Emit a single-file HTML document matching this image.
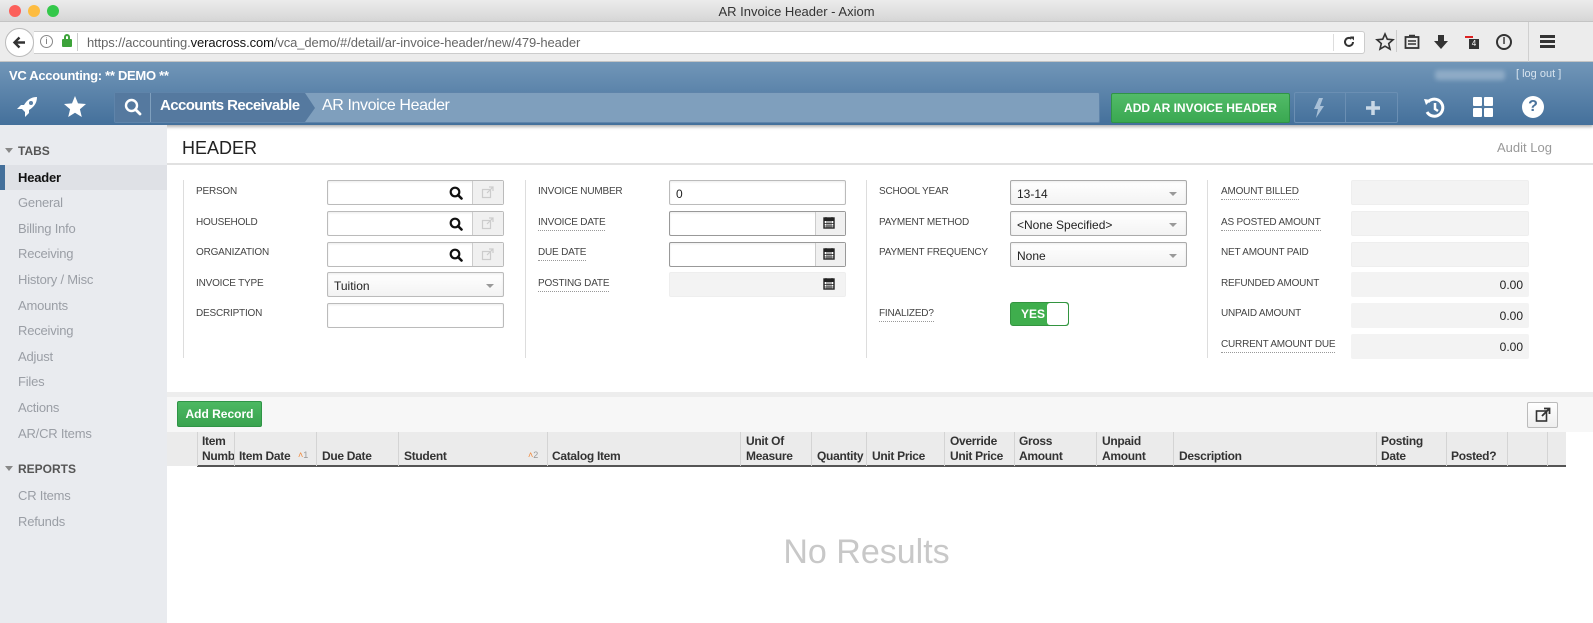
<!DOCTYPE html>
<html><head><meta charset="utf-8"><style>
*{box-sizing:border-box;margin:0;padding:0}
body{width:1593px;height:623px;overflow:hidden;position:relative;font-family:"Liberation Sans",sans-serif;background:#fff}
.a{position:absolute}
.lbl{position:absolute;font-size:10px;color:#444;letter-spacing:-0.2px}
.dot{border-bottom:1px dotted #999;padding-bottom:2px}
.in{position:absolute;height:25px;border:1px solid #bbb;border-radius:2px;background:#fff;font-size:12px;color:#222;padding:6px 6px;box-shadow:inset 0 1px 2px rgba(0,0,0,.08)}
.ro{position:absolute;height:25px;background:#f3f3f3;border:1px solid #eee;border-radius:2px;font-size:12px;color:#222;text-align:right;padding:6px 6px}
.sel:after{content:"";position:absolute;right:9px;top:11px;border:4px solid transparent;border-top:4px solid #999}
.side{position:absolute;left:18px;font-size:13px;color:#9a9ea5;letter-spacing:-0.2px}
.th{position:absolute;top:434px;font-size:12px;font-weight:bold;color:#333;line-height:15px;letter-spacing:-0.3px}
.vl{position:absolute;top:432px;height:34px;width:1px;background:#d4d4d4}
</style></head><body>
<svg width="0" height="0" style="position:absolute"><defs>
<g id="mag"><circle cx="6" cy="6" r="4.3" fill="none" stroke="#111" stroke-width="2.2"/><path d="M9 9l3.5 3.5" stroke="#111" stroke-width="2.6" stroke-linecap="round"/></g>
<g id="cal"><rect x="1" y="2" width="10" height="10" fill="#fff" stroke="#222" stroke-width="1.4"/><rect x="1" y="2" width="10" height="3" fill="#222"/><path d="M3 1v2M9 1v2M4 5v7M6 5v7M8 5v7M1 7.5h10M1 10h10" stroke="#222" stroke-width="0.8"/></g>
<g id="ext"><rect x="1.5" y="3.5" width="8" height="8" fill="none" stroke="#ccc" stroke-width="1.2"/><path d="M6 7l6-6M8 1h4v4" fill="none" stroke="#ccc" stroke-width="1.2"/></g>
</defs></svg>
<!-- title bar -->
<div class="a" style="left:0;top:0;width:1593px;height:22px;background:linear-gradient(#ececec,#d6d6d6);border-bottom:1px solid #c4c4c4"></div>
<div class="a" style="left:9px;top:5px;width:12px;height:12px;border-radius:6px;background:#fc605b"></div>
<div class="a" style="left:28px;top:5px;width:12px;height:12px;border-radius:6px;background:#fdbc40"></div>
<div class="a" style="left:47px;top:5px;width:12px;height:12px;border-radius:6px;background:#34c84a"></div>
<div class="a" style="left:0;top:4px;width:1593px;text-align:center;font-size:13px;color:#333">AR Invoice Header - Axiom</div>
<!-- toolbar -->
<div class="a" style="left:0;top:22px;width:1593px;height:40px;background:#ececec;border-bottom:1px solid #c8c8c8"></div>
<div class="a" style="left:34px;top:31px;width:1331px;height:23px;background:#fff;border:1px solid #ccc;border-left:none;border-radius:0 3px 3px 0"></div>
<div class="a" style="left:5px;top:28px;width:29px;height:29px;border-radius:15px;background:#fff;border:1px solid #bbb"></div>
<svg class="a" style="left:11px;top:34px" width="17" height="17"><path d="M14 8.5H4M8.5 3.5l-5 5 5 5" fill="none" stroke="#333" stroke-width="2.4"/></svg>
<div class="a" style="left:40px;top:35px;width:13px;height:13px;border:1px solid #888;border-radius:7px;font-size:9px;text-align:center;line-height:11px;color:#666">i</div>
<div class="a" style="left:62px;top:39px;width:10px;height:8px;background:#3da33a;border-radius:1px"></div>
<div class="a" style="left:64px;top:34px;width:6px;height:7px;border:2px solid #3da33a;border-bottom:none;border-radius:3px 3px 0 0"></div>
<div class="a" style="left:77px;top:33px;width:1px;height:18px;background:#ccc"></div>
<div class="a" style="left:87px;top:35px;font-size:13px;color:#666;letter-spacing:-0.1px">https://accounting.<span style="color:#111">veracross.com</span>/vca_demo/#/detail/ar-invoice-header/new/479-header</div>
<div class="a" style="left:1333px;top:34px;width:1px;height:17px;background:#ddd"></div>
<svg class="a" style="left:1342px;top:35px" width="14" height="14"><path d="M11 7a4 4 0 1 1-1.5-3.2" fill="none" stroke="#333" stroke-width="2"/><path d="M8 1.5h4v4z" fill="#333"/></svg>
<svg class="a" style="left:1375px;top:32px" width="20" height="20"><path d="M10 2l2.3 5.2 5.7.5-4.3 3.8 1.3 5.6L10 14.2 5 17.1l1.3-5.6L2 7.7l5.7-.5z" fill="none" stroke="#333" stroke-width="1.6"/></svg>
<div class="a" style="left:1396px;top:30px;width:1px;height:22px;background:#ccc"></div>
<svg class="a" style="left:1404px;top:34px" width="16" height="16"><rect x="1.5" y="3" width="13" height="11" fill="none" stroke="#333" stroke-width="1.8"/><path d="M5 1.5h6M4 7h8M4 10h8" stroke="#333" stroke-width="1.6"/></svg>
<svg class="a" style="left:1433px;top:34px" width="16" height="16"><path d="M5 1h6v6h4l-7 8-7-8h4z" fill="#333"/></svg>
<div class="a" style="left:1465px;top:36px;width:8px;height:2px;background:#d22"></div>
<div class="a" style="left:1469px;top:39px;width:10px;height:10px;background:#333;color:#fff;font-size:8px;text-align:center;line-height:10px">4</div>
<div class="a" style="left:1496px;top:34px;width:16px;height:16px;border:2px solid #333;border-radius:8px;font-size:10px;text-align:center;line-height:12px;font-weight:bold;color:#333">I</div>
<div class="a" style="left:1528px;top:22px;width:1px;height:40px;background:#d0d0d0"></div>
<div class="a" style="left:1540px;top:35px;width:15px;height:3px;background:#333;box-shadow:0 5px 0 #333,0 10px 0 #333"></div>
<!-- app header -->
<div class="a" style="left:0;top:62px;width:1593px;height:63px;background:linear-gradient(#7196b8,#44709b);box-shadow:0 2px 3px rgba(0,0,0,.3)"></div>
<div class="a" style="left:9px;top:68px;font-size:13px;color:#fff;font-weight:bold;letter-spacing:-0.3px">VC Accounting: ** DEMO **</div>
<div class="a" style="left:1435px;top:70px;width:70px;height:10px;background:#8eabc6;border-radius:3px;filter:blur(2px)"></div>
<div class="a" style="left:1516px;top:68px;font-size:11px;color:#d7e3ee">[ log out ]</div>
<svg class="a" style="left:16px;top:96px" width="22" height="22"><path d="M21 1c-6 0-10 3-13 8l-3 0-4 4 5 0 3 3 0 5 4-4 0-3c5-3 8-7 8-13z" fill="#fff"/><circle cx="15" cy="7" r="2" fill="#5a80a6"/></svg>
<svg class="a" style="left:63px;top:95px" width="24" height="24"><path d="M12 1l3 7.4 8 .6-6.1 5.2 1.9 7.8L12 17.8 5.2 22l1.9-7.8L1 9l8-.6z" fill="#fff"/></svg>
<div class="a" style="left:114px;top:92px;width:986px;height:31px;background:#7f9fbd;border:1px solid #5f84aa;border-radius:2px"></div>
<div class="a" style="left:115px;top:93px;width:190px;height:29px;background:#55799f"></div>
<div class="a" style="left:305px;top:93px;width:0;height:0;border-top:15px solid transparent;border-bottom:14px solid transparent;border-left:10px solid #55799f"></div>
<div class="a" style="left:150px;top:93px;width:1px;height:29px;background:#7f9fbd"></div>
<svg class="a" style="left:124px;top:98px" width="18" height="18"><circle cx="7.5" cy="7.5" r="5.5" fill="none" stroke="#fff" stroke-width="2.4"/><path d="M11.5 11.5l4.5 4.5" stroke="#fff" stroke-width="2.8" stroke-linecap="round"/></svg>
<div class="a" style="left:160px;top:97px;font-size:15px;color:#fff;font-weight:bold;letter-spacing:-0.6px">Accounts Receivable</div>
<div class="a" style="left:322px;top:97px;font-size:16px;color:#fff;letter-spacing:-0.4px">AR Invoice Header</div>
<div class="a" style="left:1111px;top:93px;width:179px;height:30px;background:linear-gradient(#52bb68,#3aa851);border:1px solid #2f9446;border-radius:2px;color:#fff;font-size:12px;font-weight:bold;text-align:center;line-height:28px">ADD AR INVOICE HEADER</div>
<div class="a" style="left:1294px;top:92px;width:104px;height:31px;border:1px solid #6b8fb3;border-radius:2px"></div>
<div class="a" style="left:1345px;top:92px;width:1px;height:31px;background:#6b8fb3"></div>
<svg class="a" style="left:1313px;top:98px" width="12" height="20"><path d="M6 0L1 11h4l-2 9 8-12H7l3-8z" fill="#a8c0d7"/></svg>
<svg class="a" style="left:1365px;top:100px" width="16" height="16"><path d="M8 1v14M1 8h14" stroke="#c9d8e6" stroke-width="3.5"/></svg>
<svg class="a" style="left:1423px;top:96px" width="24" height="24"><path d="M5 6A8.5 8.5 0 1 1 4 16" fill="none" stroke="#fff" stroke-width="3"/><path d="M1 3l7 1-5 5z" fill="#fff"/><path d="M12 7v6l3 2" fill="none" stroke="#fff" stroke-width="2.5"/></svg>
<div class="a" style="left:1473px;top:97px;width:9px;height:9px;background:#fff;border-radius:1px;box-shadow:11px 0 #fff,0 11px #fff,11px 11px #fff"></div>
<div class="a" style="left:1522px;top:96px;width:22px;height:22px;border-radius:11px;background:#fff;color:#4a739c;font-weight:bold;font-size:16px;text-align:center;line-height:22px">?</div>
<!-- sidebar -->
<div class="a" style="left:0;top:125px;width:167px;height:498px;background:#e9ebef"></div>
<div class="a" style="left:5px;top:148px;border:4px solid transparent;border-top:5px solid #888"></div>
<div class="a" style="left:18px;top:144px;font-size:12px;font-weight:bold;color:#555">TABS</div>
<div class="a" style="left:0;top:165px;width:167px;height:25px;background:#dfe1e6;border-left:5px solid #44709b"></div>
<div class="side" style="top:170px;color:#111;font-weight:bold">Header</div>
<div class="side" style="top:195px">General</div>
<div class="side" style="top:221px">Billing Info</div>
<div class="side" style="top:246px">Receiving</div>
<div class="side" style="top:272px">History / Misc</div>
<div class="side" style="top:298px">Amounts</div>
<div class="side" style="top:323px">Receiving</div>
<div class="side" style="top:349px">Adjust</div>
<div class="side" style="top:374px">Files</div>
<div class="side" style="top:400px">Actions</div>
<div class="side" style="top:426px">AR/CR Items</div>
<div class="a" style="left:5px;top:466px;border:4px solid transparent;border-top:5px solid #888"></div>
<div class="a" style="left:18px;top:462px;font-size:12px;font-weight:bold;color:#555">REPORTS</div>
<div class="side" style="top:488px">CR Items</div>
<div class="side" style="top:514px">Refunds</div>
<!-- content header -->
<div class="a" style="left:182px;top:138px;font-size:18px;color:#222">HEADER</div>
<div class="a" style="left:1497px;top:140px;font-size:13px;color:#999">Audit Log</div>
<div class="a" style="left:167px;top:163px;width:1426px;height:2px;background:#e1e1e1"></div>
<!-- column dividers -->
<div class="a" style="left:183px;top:180px;width:1px;height:178px;background:#ddd"></div>
<div class="a" style="left:525px;top:180px;width:1px;height:178px;background:#ddd"></div>
<div class="a" style="left:866px;top:180px;width:1px;height:178px;background:#ddd"></div>
<div class="a" style="left:1207px;top:180px;width:1px;height:178px;background:#ddd"></div>
<!-- col1 -->
<div class="lbl" style="left:196px;top:186px">PERSON</div>
<div class="lbl" style="left:196px;top:217px">HOUSEHOLD</div>
<div class="lbl" style="left:196px;top:247px">ORGANIZATION</div>
<div class="lbl" style="left:196px;top:278px">INVOICE TYPE</div>
<div class="lbl" style="left:196px;top:308px">DESCRIPTION</div>
<div class="in" style="left:327px;top:180px;width:177px"></div>
<div class="in" style="left:327px;top:211px;width:177px"></div>
<div class="in" style="left:327px;top:242px;width:177px"></div>
<div class="a" style="left:472px;top:181px;width:31px;height:23px;background:#f0f0f0;border-left:1px solid #ccc"></div>
<div class="a" style="left:472px;top:212px;width:31px;height:23px;background:#f0f0f0;border-left:1px solid #ccc"></div>
<div class="a" style="left:472px;top:243px;width:31px;height:23px;background:#f0f0f0;border-left:1px solid #ccc"></div>
<svg class="a" style="left:449px;top:186px" width="14" height="14"><use href="#mag"/></svg>
<svg class="a" style="left:449px;top:217px" width="14" height="14"><use href="#mag"/></svg>
<svg class="a" style="left:449px;top:248px" width="14" height="14"><use href="#mag"/></svg>
<svg class="a" style="left:481px;top:186px" width="14" height="14"><use href="#ext"/></svg>
<svg class="a" style="left:481px;top:217px" width="14" height="14"><use href="#ext"/></svg>
<svg class="a" style="left:481px;top:248px" width="14" height="14"><use href="#ext"/></svg>
<div class="in sel" style="left:327px;top:272px;width:177px;background:linear-gradient(#fff,#f3f3f3)">Tuition</div>
<div class="in" style="left:327px;top:303px;width:177px"></div>
<!-- col2 -->
<div class="lbl" style="left:538px;top:186px">INVOICE NUMBER</div>
<div class="lbl dot" style="left:538px;top:217px">INVOICE DATE</div>
<div class="lbl dot" style="left:538px;top:247px">DUE DATE</div>
<div class="lbl dot" style="left:538px;top:278px">POSTING DATE</div>
<div class="in" style="left:669px;top:180px;width:177px">0</div>
<div class="in" style="left:669px;top:211px;width:177px;border-color:#999"></div>
<div class="in" style="left:669px;top:242px;width:177px;border-color:#999"></div>
<div class="ro" style="left:669px;top:272px;width:177px"></div>
<div class="a" style="left:815px;top:212px;width:30px;height:23px;background:#f0f0f0;border-left:1px solid #ccc"></div>
<div class="a" style="left:815px;top:243px;width:30px;height:23px;background:#f0f0f0;border-left:1px solid #ccc"></div>
<svg class="a" style="left:823px;top:216px" width="13" height="14"><use href="#cal"/></svg>
<svg class="a" style="left:823px;top:247px" width="13" height="14"><use href="#cal"/></svg>
<svg class="a" style="left:823px;top:277px" width="13" height="14"><use href="#cal"/></svg>
<!-- col3 -->
<div class="lbl" style="left:879px;top:186px">SCHOOL YEAR</div>
<div class="lbl" style="left:879px;top:217px">PAYMENT METHOD</div>
<div class="lbl" style="left:879px;top:247px">PAYMENT FREQUENCY</div>
<div class="lbl dot" style="left:879px;top:308px">FINALIZED?</div>
<div class="in sel" style="left:1010px;top:180px;width:177px;border-color:#aaa;background:linear-gradient(#fff,#f3f3f3)">13-14</div>
<div class="in sel" style="left:1010px;top:211px;width:177px;border-color:#aaa;background:linear-gradient(#fff,#f3f3f3)">&lt;None Specified&gt;</div>
<div class="in sel" style="left:1010px;top:242px;width:177px;border-color:#aaa;background:linear-gradient(#fff,#f3f3f3)">None</div>
<div class="a" style="left:1010px;top:302px;width:59px;height:24px;background:#3fae4d;border:1px solid #339440;border-radius:3px;color:#fff;font-size:12px;font-weight:bold;line-height:22px;padding-left:10px">YES</div>
<div class="a" style="left:1047px;top:303px;width:21px;height:22px;background:#fff;border-radius:3px"></div>
<!-- col4 -->
<div class="lbl dot" style="left:1221px;top:186px">AMOUNT BILLED</div>
<div class="lbl dot" style="left:1221px;top:217px">AS POSTED AMOUNT</div>
<div class="lbl" style="left:1221px;top:247px">NET AMOUNT PAID</div>
<div class="lbl" style="left:1221px;top:278px">REFUNDED AMOUNT</div>
<div class="lbl" style="left:1221px;top:308px">UNPAID AMOUNT</div>
<div class="lbl dot" style="left:1221px;top:339px">CURRENT AMOUNT DUE</div>
<div class="ro" style="left:1351px;top:180px;width:178px"></div>
<div class="ro" style="left:1351px;top:211px;width:178px"></div>
<div class="ro" style="left:1351px;top:242px;width:178px"></div>
<div class="ro" style="left:1351px;top:272px;width:178px;border:none">0.00</div>
<div class="ro" style="left:1351px;top:303px;width:178px;border:none">0.00</div>
<div class="ro" style="left:1351px;top:334px;width:178px;border:none">0.00</div>
<!-- grid -->
<div class="a" style="left:167px;top:392px;width:1426px;height:5px;background:#ededed"></div>
<div class="a" style="left:167px;top:397px;width:1426px;height:35px;background:#f7f7f7"></div>
<div class="a" style="left:177px;top:401px;width:85px;height:26px;background:linear-gradient(#4cb862,#39a34f);border:1px solid #2f9446;border-radius:2px;color:#fff;font-size:12px;font-weight:bold;text-align:center;line-height:24px">Add Record</div>
<div class="a" style="left:1527px;top:402px;width:31px;height:26px;background:linear-gradient(#fff,#eee);border:1px solid #bbb;border-radius:2px"></div>
<svg class="a" style="left:1535px;top:407px" width="16" height="16"><rect x="1.5" y="4" width="10" height="10" fill="none" stroke="#333" stroke-width="1.6"/><path d="M7 9l7-7M9 1.5h5.5V7" fill="none" stroke="#333" stroke-width="1.8"/></svg>
<div class="a" style="left:167px;top:432px;width:1399px;height:34px;background:#ebebeb"></div>
<div class="a" style="left:197px;top:465px;width:1369px;height:2px;background:#555"></div>
<div class="a" style="left:1566px;top:432px;width:27px;height:191px;background:#fff"></div>
<div class="vl" style="left:197px"></div><div class="vl" style="left:234px"></div><div class="vl" style="left:316px"></div>
<div class="vl" style="left:398px"></div><div class="vl" style="left:547px"></div><div class="vl" style="left:740px"></div>
<div class="vl" style="left:811px"></div><div class="vl" style="left:866px"></div><div class="vl" style="left:944px"></div>
<div class="vl" style="left:1014px"></div><div class="vl" style="left:1096px"></div><div class="vl" style="left:1173px"></div>
<div class="vl" style="left:1376px"></div><div class="vl" style="left:1446px"></div><div class="vl" style="left:1507px"></div><div class="vl" style="left:1547px"></div>
<div class="th" style="left:202px;width:32px;overflow:hidden;white-space:nowrap">Item<br>Number</div>
<div class="th" style="left:239px;top:449px">Item Date</div>
<div class="a" style="left:298px;top:450px;font-size:9px;color:#f0883a">&#708;<span style="color:#999">1</span></div>
<div class="th" style="left:322px;top:449px">Due Date</div>
<div class="th" style="left:404px;top:449px">Student</div>
<div class="a" style="left:528px;top:450px;font-size:9px;color:#f0883a">&#708;<span style="color:#999">2</span></div>
<div class="th" style="left:552px;top:449px">Catalog Item</div>
<div class="th" style="left:746px">Unit Of<br>Measure</div>
<div class="th" style="left:817px;top:449px">Quantity</div>
<div class="th" style="left:872px;top:449px">Unit Price</div>
<div class="th" style="left:950px">Override<br>Unit Price</div>
<div class="th" style="left:1019px">Gross<br>Amount</div>
<div class="th" style="left:1102px">Unpaid<br>Amount</div>
<div class="th" style="left:1179px;top:449px">Description</div>
<div class="th" style="left:1381px">Posting<br>Date</div>
<div class="th" style="left:1451px;top:449px">Posted?</div>
<div class="a" style="left:167px;top:533px;width:1399px;text-align:center;font-size:34px;color:#c8c8c8">No Results</div>
</body></html>
